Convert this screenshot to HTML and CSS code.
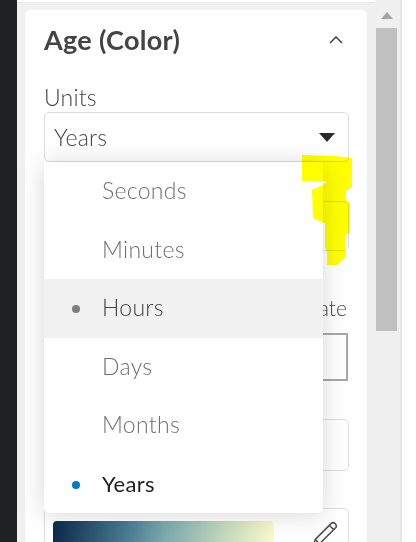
FILE: index.html
```html
<!DOCTYPE html>
<html lang="en">
<head>
<meta charset="utf-8">
<title>Age (Color)</title>
<link rel="stylesheet" href="styles.css">
</head>
<body>
<div class="window">
  <div class="rail"></div>
  <div class="main">
    <div class="topline"></div>
    <section class="panel">
      <header class="panel-head">
        <h2>Age (Color)</h2>
        <svg class="chev" width="14" height="9" viewBox="0 0 14 9"><path d="M1 8 L7 2 L13 8" fill="none" stroke="#333" stroke-width="1.4"/></svg>
      </header>
      <label class="field-label">Units</label>
      <div class="select">
        <span>Years</span>
        <svg width="16" height="9" viewBox="0 0 16 9"><path d="M0 0 H16 L8 9 Z" fill="#2b2b2b"/></svg>
      </div>
      <div class="input second"></div>
      <div class="label-row">Normalize by date</div>
      <div class="check-box"></div>
      <div class="input third"></div>
      <div class="ramp-box">
        <div class="ramp"></div>
        <svg class="pencil" width="26" height="26" viewBox="0 0 24 24"><path d="M1.5 22.5 L3 17 L18 2 Q19.5 .8 21.5 2.5 Q23.2 4.5 22 6 L7 21 Z M3 17 L7 21 M16 4 L20 8" fill="none" stroke="#4a4a4a" stroke-width="1.4"/></svg>
      </div>
    </section>
  </div>
  <div class="scroll">
    <div class="scroll-btn"><svg width="12" height="7" viewBox="0 0 12 7"><path d="M6 0 L12 7 H0 Z" fill="#a3a3a3"/></svg></div>
    <div class="thumb"></div>
  </div>
</div>
<ul class="menu">
  <li>Seconds</li>
  <li>Minutes</li>
  <li class="hover">Hours</li>
  <li>Days</li>
  <li>Months</li>
  <li class="selected">Years</li>
</ul>
<svg class="marker" width="416" height="542" viewBox="0 0 416 542"><path d="M302 155 L335 156 L352 158 L352 187 L346 191 L346 200 L350 203 L350 233 L345 235 L345 258 L337 265 L327 265 L327 252 L325 247 L325 223 L323 223 L313 218 L312 190 L323 185 L327 181 L302 181 Z" fill="#ffff00"/></svg>
</body>
</html>
```
FILE: styles.css
```css
* { box-sizing: border-box; }
html, body { margin: 0; height: 100%; background: #fff; overflow: hidden; }
body { font-family: Lato, "Open Sans", sans-serif; font-weight: 300; color: #444; position: relative; }
.window { display: flex; width: 402px; height: 542px; overflow: hidden; background: #f0f0f0; border-right: 2px solid #e6e6e6; }
.rail { width: 17px; background: #202124; flex: none; }
.main { width: 350px; flex: none; padding: 0 0 0 8px; }
.topline { height: 3px; background: #fff; border-bottom: 1px solid #e8e8e8; margin: 0 -8px 7px -8px; }
.panel { background: #fff; width: 342px; height: 532px; overflow: hidden; border-radius: 5px 5px 0 0; padding: 0 18px 0 19px; }
.panel-head { display: flex; justify-content: space-between; align-items: center; height: 58px; padding-right: 6px; }
.panel-head h2 { margin: 0; font-size: 27px; font-weight: 700; letter-spacing: .3px; color: #444; }
.field-label { display: block; margin-top: 16px; font-size: 23px; line-height: 26px; letter-spacing: .2px; }
.select { display: flex; justify-content: space-between; align-items: center; width: 305px; height: 50px; margin-top: 2px; padding: 0 13px 0 9px; border: 1px solid #ddd; border-radius: 5px; font-size: 23px; letter-spacing: .2px; background: #fff; }
.input { width: 305px; border: 1px solid #ddd; border-radius: 5px; }
.input.second { height: 50px; margin-top: 39px; }
.label-row { text-align: right; width: 303px; font-size: 21px; line-height: 24px; margin-top: 45px; white-space: nowrap; }
.check-box { width: 304px; height: 48px; margin-top: 13px; border: 2px solid #a8a8a8; }
.input.third { height: 52px; margin-top: 38px; }
.ramp-box { display: flex; justify-content: space-between; width: 305px; height: 60px; margin-top: 37px; padding: 12px 10px 0 8px; border: 1px solid #ddd; border-radius: 5px; }
.ramp { width: 221px; height: 40px; border-radius: 4px; background: linear-gradient(90deg, #0d2a4c 0%, #4d7f95 35%, #7aa8ad 50%, #cfe0c0 82%, #fbf8cd 100%); }
.scroll { width: 33px; flex: none; padding-left: 9px; }
.scroll-btn { height: 28px; display: flex; justify-content: center; align-items: center; width: 21px; padding-top: 3px; }
.thumb { width: 21px; height: 303px; background: #c0c0c0; }
.menu { position: absolute; left: 44px; top: 162px; width: 279px; height: 351px; margin: 0; padding: 0; list-style: none; background: #fff; border-radius: 0 0 5px 5px; box-shadow: 0 2px 24px rgba(0,0,0,.16); }
.menu li { position: relative; height: 58.5px; line-height: 57.5px; padding-left: 58px; font-size: 23px; letter-spacing: .3px; color: #6f6f6f; }
.menu li.hover { background: #f1f1f1; color: #444; }
.menu li.hover::before, .menu li.selected::before { content: ""; position: absolute; left: 28px; top: 26px; width: 8px; height: 8px; border-radius: 50%; background: #7e7e7e; }
.menu li.selected { color: #1f1f1f; font-weight: 400; font-size: 22px; }
.menu li.selected::before { background: #0079c1; }
.marker { position: absolute; left: 0; top: 0; pointer-events: none; mix-blend-mode: multiply; }
```
